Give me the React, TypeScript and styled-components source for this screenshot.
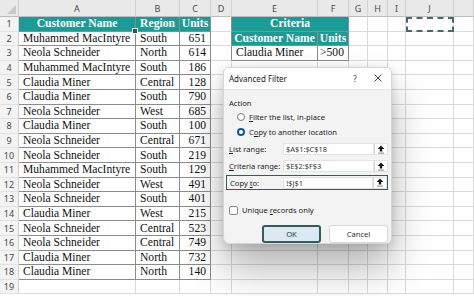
import React from 'react';
import styled, { createGlobalStyle, css } from 'styled-components';

const GlobalStyle = createGlobalStyle`
  html, body {
    margin: 0;
    padding: 0;
    background: #ffffff;
    overflow: hidden;
  }
`;

type Row = { name: string; region: string; units: number };

const rows: Row[] = [
  { name: 'Muhammed MacIntyre', region: 'South', units: 651 },
  { name: 'Neola Schneider', region: 'North', units: 614 },
  { name: 'Muhammed MacIntyre', region: 'South', units: 186 },
  { name: 'Claudia Miner', region: 'Central', units: 128 },
  { name: 'Claudia Miner', region: 'South', units: 790 },
  { name: 'Neola Schneider', region: 'West', units: 685 },
  { name: 'Claudia Miner', region: 'South', units: 100 },
  { name: 'Neola Schneider', region: 'Central', units: 671 },
  { name: 'Neola Schneider', region: 'South', units: 219 },
  { name: 'Muhammed MacIntyre', region: 'South', units: 129 },
  { name: 'Neola Schneider', region: 'West', units: 491 },
  { name: 'Neola Schneider', region: 'South', units: 401 },
  { name: 'Claudia Miner', region: 'West', units: 215 },
  { name: 'Neola Schneider', region: 'Central', units: 523 },
  { name: 'Neola Schneider', region: 'Central', units: 749 },
  { name: 'Claudia Miner', region: 'North', units: 732 },
  { name: 'Claudia Miner', region: 'North', units: 140 },
];

const columns = ['A', 'B', 'C', 'D', 'E', 'F', 'G', 'H', 'I', 'J', 'K'];
const TEAL = '#1a9b96';
const DARK = '#8c8c8c';

const Page = styled.div`
  position: relative;
  width: 474px;
  height: 296px;
  overflow: hidden;
`;

const Sheet = styled.div`
  display: grid;
  grid-template-columns: 19px 117px 44px 31px 21px 86px 31px 19px 20px 18px 48px 1fr;
  grid-template-rows: 17px repeat(19, 14.6px);
`;

const Corner = styled.div`
  position: relative;
  background: #e9e9e9;
  border-right: 1px solid #cfcfcf;
  border-bottom: 1px solid #bdbdbd;
  box-sizing: border-box;

  &::after {
    content: '';
    position: absolute;
    right: 2px;
    bottom: 2px;
    width: 0;
    height: 0;
    border-left: 9px solid transparent;
    border-bottom: 9px solid #c9c9c9;
  }
`;

const ColHead = styled.div`
  display: flex;
  align-items: center;
  justify-content: center;
  background: #e9e9e9;
  border-right: 1px solid #d2d2d2;
  border-bottom: 1px solid #bdbdbd;
  box-sizing: border-box;
  font-family: 'Noto Sans', sans-serif;
  font-size: 9px;
  color: #4a4a4a;
`;

const RowHead = styled.div`
  display: flex;
  align-items: center;
  justify-content: center;
  background: #f3f3f3;
  border-right: 1px solid #cfcfcf;
  border-bottom: 1px solid #e2e2e2;
  box-sizing: border-box;
  font-family: 'Noto Sans', sans-serif;
  font-size: 9px;
  color: #4a4a4a;
`;

const Cell = styled.div<{
  $tone?: 'teal' | 'data' | 'blank';
  $align?: 'left' | 'center' | 'right';
  $span?: number;
  $rightDark?: boolean;
  $bottomDark?: boolean;
}>`
  position: relative;
  display: flex;
  align-items: center;
  box-sizing: border-box;
  padding: 0 4px;
  overflow: visible;
  white-space: nowrap;
  font-family: 'Liberation Serif', 'Times New Roman', serif;
  font-size: 11.6px;
  color: #111;
  border-right: 1px solid ${(p) => (p.$rightDark ? DARK : '#dadada')};
  border-bottom: 1px solid ${(p) => (p.$bottomDark ? DARK : '#dadada')};
  justify-content: ${(p) =>
    p.$align === 'center' ? 'center' : p.$align === 'right' ? 'flex-end' : 'flex-start'};
  ${(p) => p.$span && css`grid-column: span ${p.$span};`}
  ${(p) =>
    p.$tone === 'teal' &&
    css`
      background: ${TEAL};
      color: #ffffff;
      font-weight: bold;
    `}
`;

const FillHandle = styled.span`
  position: absolute;
  right: -3px;
  bottom: -3px;
  width: 4px;
  height: 4px;
  background: #1f5f4a;
  border: 1px solid #fff;
  z-index: 2;
`;

const Marquee = styled.span`
  position: absolute;
  inset: 0 -1px -1px 0;
  border: 2px dashed #3c6f66;
  box-sizing: border-box;
`;

const Dialog = styled.div`
  position: absolute;
  left: 223px;
  top: 67px;
  width: 169px;
  height: 177px;
  box-sizing: border-box;
  border: 1px solid #d6d6d6;
  border-radius: 6px;
  background: #f3f3f3;
  box-shadow: 0 24px 40px rgba(0, 0, 0, 0.3), 0 2px 8px rgba(0, 0, 0, 0.14);
  font-family: 'Noto Sans', 'Open Sans', sans-serif;
  font-size: 7.6px;
  color: #1b1b1b;
  display: flex;
  flex-direction: column;
  overflow: hidden;
`;

const TitleBar = styled.div`
  display: flex;
  align-items: center;
  height: 22px;
  padding: 0 0 0 5px;
  background: #ffffff;
  border-bottom: 1px solid #e6e6e6;
  font-size: 8px;
`;

const Title = styled.span`
  flex: 1;
`;

const TitleButton = styled.span<{ $w: number }>`
  width: ${(p) => p.$w}px;
  text-align: center;
  color: #333;
`;

const Body = styled.div`
  display: flex;
  flex-direction: column;
  padding: 4px 3px 0 5px;
`;

const SectionLabel = styled.div`
  height: 12px;
  line-height: 12px;
  margin-top: 3px;
`;

const RadioRow = styled.div`
  display: flex;
  align-items: center;
  gap: 4px;
  height: 15px;
  padding-left: 8px;
`;

const Radio = styled.span<{ $on?: boolean }>`
  width: 8px;
  height: 8px;
  border-radius: 50%;
  box-sizing: border-box;
  ${(p) =>
    p.$on
      ? css`
          border: 2.5px solid #0d5a9e;
          background: #ffffff;
        `
      : css`
          border: 1px solid #7a7a7a;
          background: #ffffff;
        `}
`;

const U = styled.span`
  text-decoration: underline;
  text-underline-offset: 1px;
`;

const FieldRow = styled.div<{ $focus?: boolean; $gap?: number }>`
  display: flex;
  align-items: center;
  height: 12px;
  margin-top: ${(p) => p.$gap ?? 5}px;
  ${(p) =>
    p.$focus &&
    css`
      margin-left: -3px;
      padding-left: 3px;
      height: 13px;
      border: 1.5px solid #2f5f5a;
    `}
`;

const FieldLabel = styled.span`
  width: 54px;
`;

const Input = styled.div`
  display: flex;
  align-items: center;
  width: 91px;
  height: 12px;
  padding-left: 2px;
  box-sizing: border-box;
  background: #ffffff;
  border: 1px solid #e3e3e3;
  font-size: 7.4px;
  color: #333;
`;

const Collapse = styled.div`
  display: flex;
  align-items: center;
  justify-content: center;
  width: 14px;
  height: 12px;
  box-sizing: border-box;
  background: #ffffff;
  border: 1px solid #e3e3e3;
  border-left: 1px solid #d8d8d8;
`;

const CheckRow = styled.div`
  display: flex;
  align-items: center;
  gap: 4px;
  margin-top: 15px;
  height: 10px;
`;

const Check = styled.span`
  width: 9px;
  height: 9px;
  box-sizing: border-box;
  border: 1px solid #8a8a8a;
  border-radius: 2px;
  background: #ffffff;
`;

const Buttons = styled.div`
  display: flex;
  gap: 8px;
  margin-top: 10px;
  padding-left: 33px;
`;

const Btn = styled.div<{ $primary?: boolean }>`
  display: flex;
  align-items: center;
  justify-content: center;
  width: 59px;
  height: 18px;
  box-sizing: border-box;
  border-radius: 3px;
  color: #333;
  ${(p) =>
    p.$primary
      ? css`
          background: #dbe9f4;
          border: 2px solid #2f5f5a;
        `
      : css`
          background: #ffffff;
          border: 1px solid #d9d9d9;
        `}
`;

const UpIcon = () => (
  <svg width="8" height="9" viewBox="0 0 8 9">
    <path d="M4 0.5 L7.5 4 L5.2 4 L5.2 6.5 L2.8 6.5 L2.8 4 L0.5 4 Z" fill="#1a1a1a" />
    <rect x="1" y="7.6" width="6" height="0.9" fill="#7a7a7a" />
  </svg>
);

const Field = ({
  label,
  value,
  focus,
  gap,
}: {
  label: React.ReactNode;
  value: string;
  focus?: boolean;
  gap?: number;
}) => (
  <FieldRow $focus={focus} $gap={gap}>
    <FieldLabel>{label}</FieldLabel>
    <Input>{value}</Input>
    <Collapse>
      <UpIcon />
    </Collapse>
  </FieldRow>
);

const AdvancedFilter = () => (
  <Dialog>
    <TitleBar>
      <Title>Advanced Filter</Title>
      <TitleButton $w={18}>?</TitleButton>
      <TitleButton $w={27}>
        <svg width="8" height="8" viewBox="0 0 8 8">
          <path d="M0.5 0.5 L7.5 7.5 M7.5 0.5 L0.5 7.5" stroke="#333" strokeWidth="0.9" />
        </svg>
      </TitleButton>
    </TitleBar>
    <Body>
      <SectionLabel>Action</SectionLabel>
      <RadioRow>
        <Radio />
        <span>
          <U>F</U>ilter the list, in-place
        </span>
      </RadioRow>
      <RadioRow>
        <Radio $on />
        <span>
          C<U>o</U>py to another location
        </span>
      </RadioRow>
      <Field
        gap={4}
        label={
          <>
            <U>L</U>ist range:
          </>
        }
        value="$A$1:$C$18"
      />
      <Field
        label={
          <>
            <U>C</U>riteria range:
          </>
        }
        value="$E$2:$F$3"
      />
      <Field
        focus
        gap={3}
        label={
          <>
            Copy <U>t</U>o:
          </>
        }
        value="!$J$1"
      />
      <CheckRow>
        <Check />
        <span>
          Unique <U>r</U>ecords only
        </span>
      </CheckRow>
      <Buttons>
        <Btn $primary>OK</Btn>
        <Btn>Cancel</Btn>
      </Buttons>
    </Body>
  </Dialog>
);

const blanks = (from: number, to: number, key: string) =>
  columns.slice(from, to).map((c) => <Cell key={`${key}${c}`} />);

export default function App() {
  const totalRows = 19;
  return (
    <Page>
      <GlobalStyle />
      <Sheet>
        <Corner />
        {columns.map((c) => (
          <ColHead key={c}>{c === 'K' ? '' : c}</ColHead>
        ))}

        {Array.from({ length: totalRows }, (_, i) => {
          const r = i + 1;
          const cells: React.ReactNode[] = [<RowHead key={`rh${r}`}>{r}</RowHead>];
          const inTable = r <= 18;
          if (r === 1) {
            cells.push(
              <Cell key="A1" $tone="teal" $align="center" $rightDark $bottomDark>
                Customer Name
                <FillHandle />
              </Cell>,
              <Cell key="B1" $tone="teal" $align="center" $rightDark $bottomDark>
                Region
              </Cell>,
              <Cell key="C1" $tone="teal" $align="center" $rightDark $bottomDark>
                Units
              </Cell>,
            );
          } else if (inTable) {
            const d = rows[r - 2];
            cells.push(
              <Cell key={`A${r}`} $tone="data" $rightDark $bottomDark>
                {d.name}
              </Cell>,
              <Cell key={`B${r}`} $tone="data" $rightDark $bottomDark>
                {d.region}
              </Cell>,
              <Cell key={`C${r}`} $tone="data" $align="right" $rightDark $bottomDark>
                {d.units}
              </Cell>,
            );
          } else {
            cells.push(...blanks(0, 3, `r${r}`));
          }

          if (r <= 3) {
            cells.push(<Cell key={`D${r}`} $rightDark />);
            if (r === 1) {
              cells.push(
                <Cell key="E1" $tone="teal" $align="center" $span={2} $rightDark $bottomDark>
                  Criteria
                </Cell>,
              );
            } else if (r === 2) {
              cells.push(
                <Cell key="E2" $tone="teal" $align="center" $rightDark $bottomDark>
                  Customer Name
                </Cell>,
                <Cell key="F2" $tone="teal" $align="center" $rightDark $bottomDark>
                  Units
                </Cell>,
              );
            } else {
              cells.push(
                <Cell key="E3" $rightDark $bottomDark>
                  Claudia Miner
                </Cell>,
                <Cell key="F3" $rightDark $bottomDark style={{ paddingLeft: 2 }}>
                  &gt;500
                </Cell>,
              );
            }
          } else {
            cells.push(...blanks(3, 6, `r${r}`));
          }

          if (r === 1) {
            cells.push(
              <Cell key="G1" />,
              <Cell key="H1" />,
              <Cell key="I1" />,
              <Cell key="J1">
                <Marquee />
              </Cell>,
              <Cell key="K1" />,
            );
          } else {
            cells.push(...blanks(6, 11, `r${r}`));
          }
          return cells;
        })}
      </Sheet>
      <AdvancedFilter />
    </Page>
  );
}
